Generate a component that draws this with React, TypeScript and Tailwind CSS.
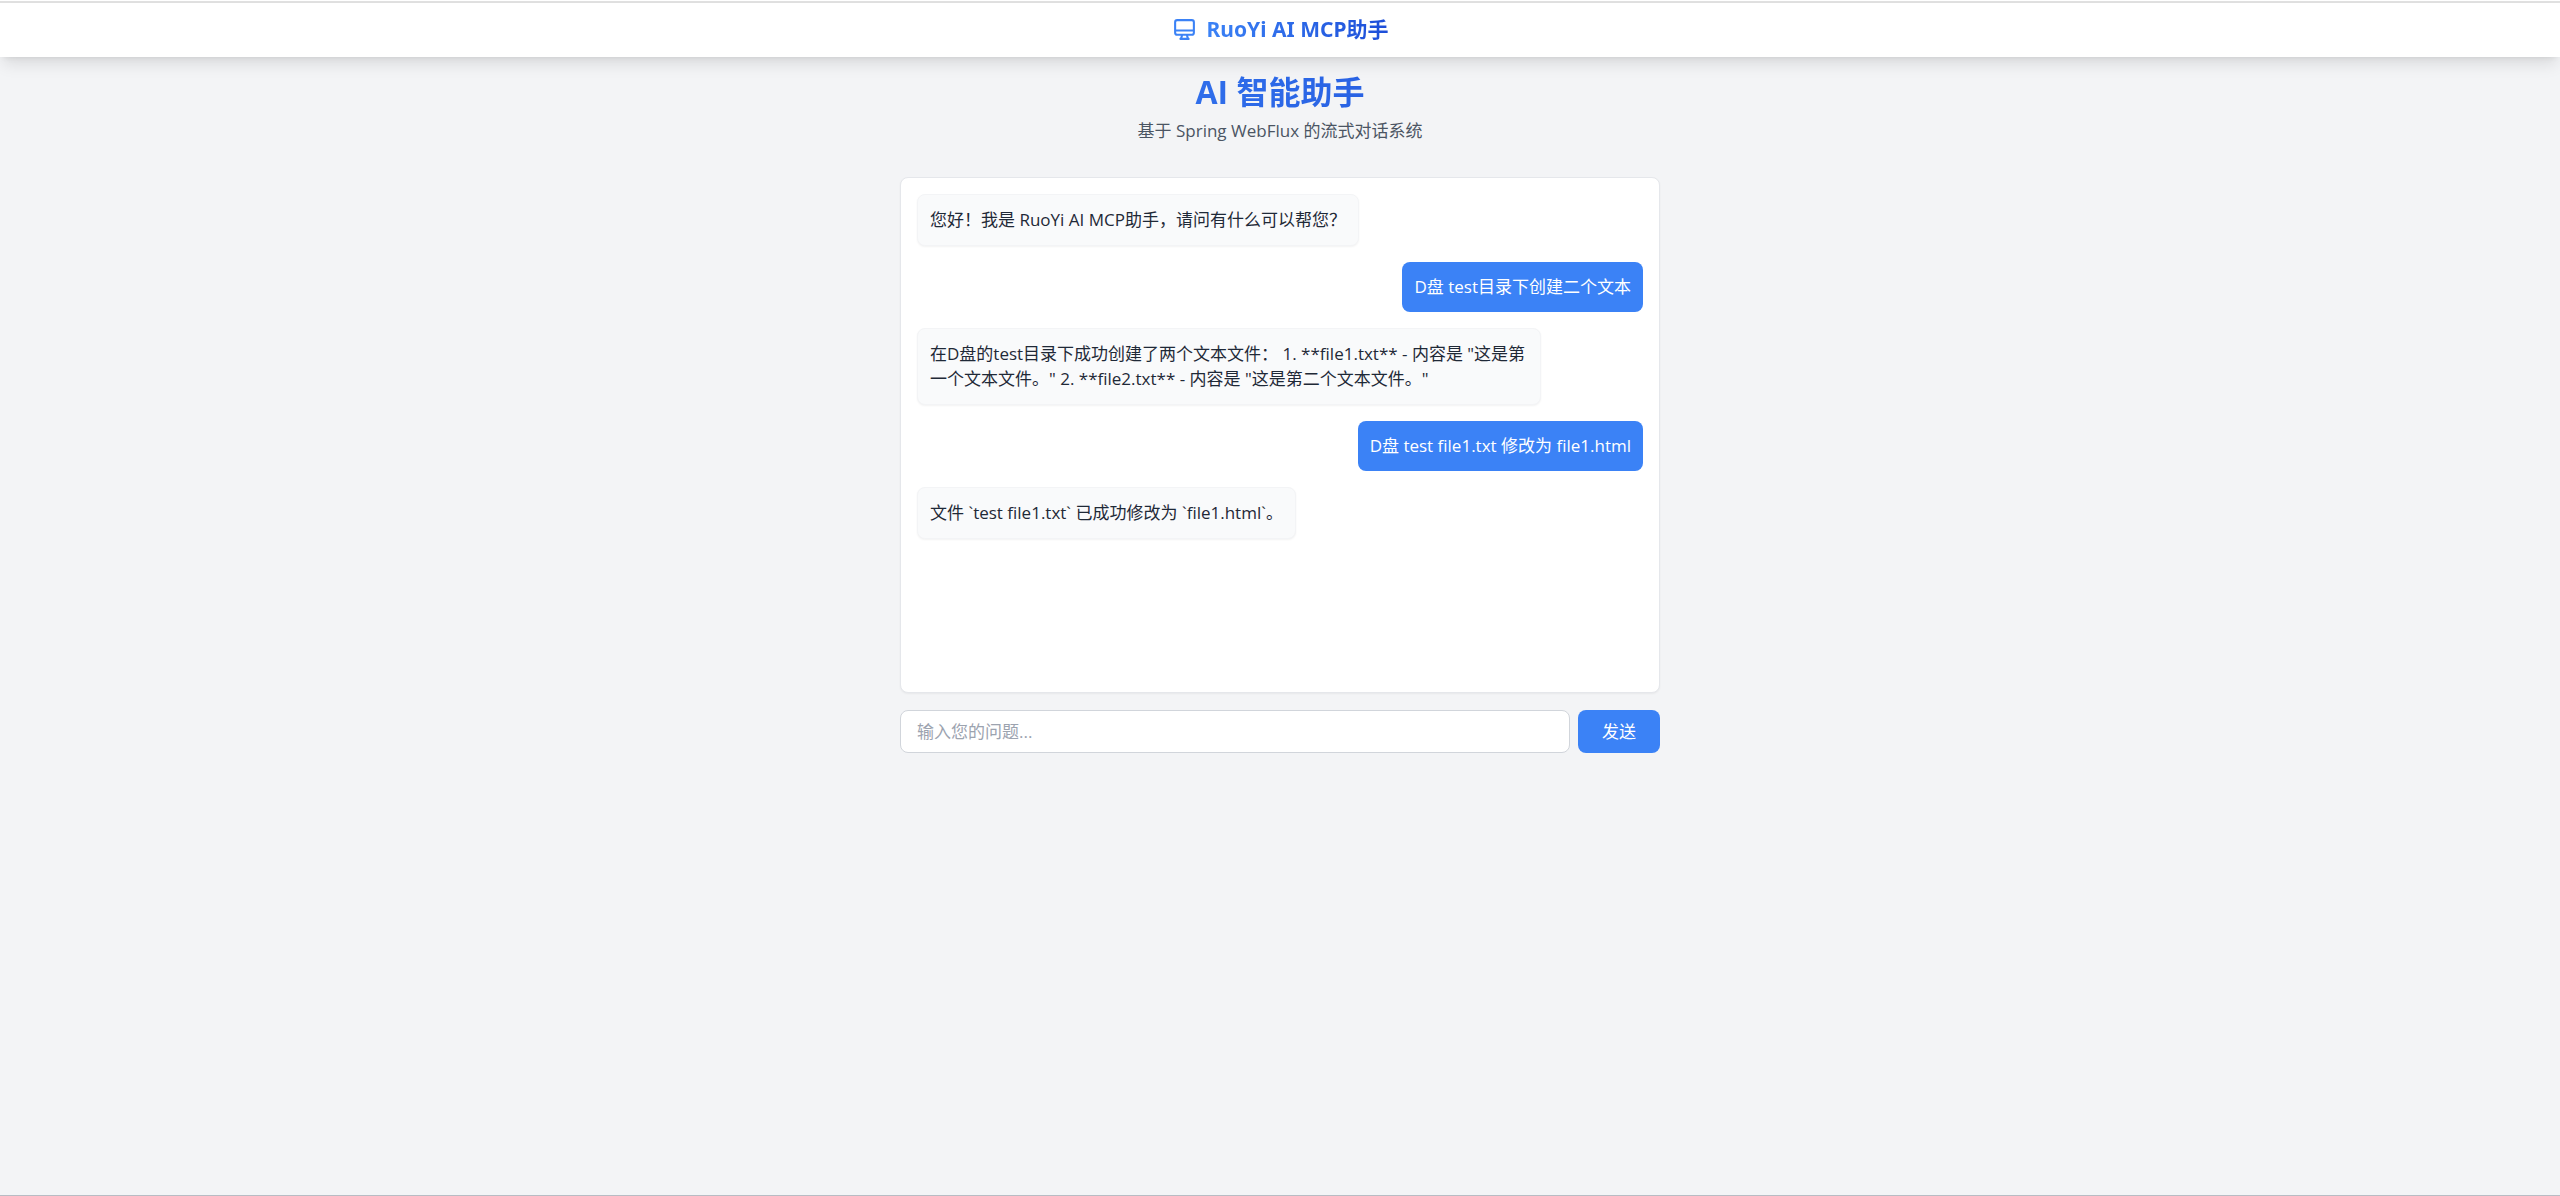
import { useState } from 'react'
import type { FormEvent } from 'react'

type Message = {
  role: 'assistant' | 'user'
  text: string
}

const initialMessages: Message[] = [
  { role: 'assistant', text: '您好！我是 RuoYi AI MCP助手，请问有什么可以帮您？' },
  { role: 'user', text: 'D盘 test目录下创建二个文本' },
  {
    role: 'assistant',
    text: '在D盘的test目录下成功创建了两个文本文件： 1. **file1.txt** - 内容是 "这是第一个文本文件。" 2. **file2.txt** - 内容是 "这是第二个文本文件。"',
  },
  { role: 'user', text: 'D盘 test file1.txt 修改为 file1.html' },
  { role: 'assistant', text: '文件 `test file1.txt` 已成功修改为 `file1.html`。' },
]

function MonitorIcon() {
  return (
    <svg
      className="w-[25px] h-[25px] text-[#3b82f6]"
      fill="none"
      viewBox="0 0 24 24"
      stroke="currentColor"
      strokeWidth={2}
      strokeLinecap="round"
      strokeLinejoin="round"
      aria-hidden="true"
    >
      <path d="M9.75 17L9 20l-1 1h8l-1-1-.75-3M3 13h18M5 17h14a2 2 0 002-2V5a2 2 0 00-2-2H5a2 2 0 00-2 2v10a2 2 0 002 2z" />
    </svg>
  )
}

function Bubble({ message }: { message: Message }) {
  if (message.role === 'user') {
    return (
      <div className="self-end max-w-[85%] px-3 pt-3 pb-[13px] rounded-lg bg-[#3b82f6] text-white">
        {message.text}
      </div>
    )
  }

  return (
    <div className="self-start max-w-[86%] px-3 pt-3 pb-[13px] rounded-lg border border-[#f3f4f6] bg-[#f9fafb] text-[#1f2937] shadow-xs">
      {message.text}
    </div>
  )
}

export default function App() {
  const [messages, setMessages] = useState(initialMessages)
  const [draft, setDraft] = useState('')

  const onSubmit = (e: FormEvent) => {
    e.preventDefault()
    const text = draft.trim()
    if (!text) return
    setMessages([...messages, { role: 'user', text }])
    setDraft('')
  }

  return (
    <div className="min-h-screen bg-[#f3f4f6] border-b border-[#b8bcc4] font-['Open_Sans','Noto_Sans_CJK_SC',sans-serif] text-[17px] leading-[25px]">
      <div className="h-[3px] bg-[#e0e0e0] border-t border-white" />
      <header className="flex items-center justify-center gap-2.5 h-[54px] pb-0.5 bg-white shadow-lg">
        <MonitorIcon />
        <span className="font-['Noto_Sans','Noto_Sans_CJK_SC',sans-serif] text-[21px] leading-7 font-bold bg-linear-to-r/srgb from-[#3b82f6] to-[#1d4ed8] bg-clip-text text-transparent">
          RuoYi AI MCP助手
        </span>
      </header>

      <main className="max-w-[760px] mx-auto pt-4">
        <div className="text-center">
          <h1 className="text-[32px] leading-[38px] font-bold bg-linear-to-r/srgb from-[#3b82f6] to-[#1d4ed8] bg-clip-text text-transparent">
            AI 智能助手
          </h1>
          <p className="mt-[7px] text-[#4b5563]">基于 Spring WebFlux 的流式对话系统</p>
        </div>

        <div className="mt-[34px] flex flex-col gap-4 h-[516px] overflow-y-auto p-4 bg-white rounded-lg border border-[#e5e7eb] shadow-xs">
          {messages.map((message, i) => (
            <Bubble key={i} message={message} />
          ))}
        </div>

        <form onSubmit={onSubmit} className="mt-[17px] flex gap-2">
          <input
            type="text"
            aria-label="输入您的问题"
            placeholder="输入您的问题..."
            value={draft}
            onChange={(e) => setDraft(e.target.value)}
            className="flex-1 min-w-0 h-[43px] px-4 bg-white border border-[#d1d5db] rounded-lg text-[#1f2937] placeholder:text-[#9ca3af] focus:outline-none focus:border-[#3b82f6]"
          />
          <button type="submit" className="h-[43px] px-6 rounded-lg bg-[#3b82f6] hover:bg-[#2563eb] text-white">
            发送
          </button>
        </form>
      </main>
    </div>
  )
}
